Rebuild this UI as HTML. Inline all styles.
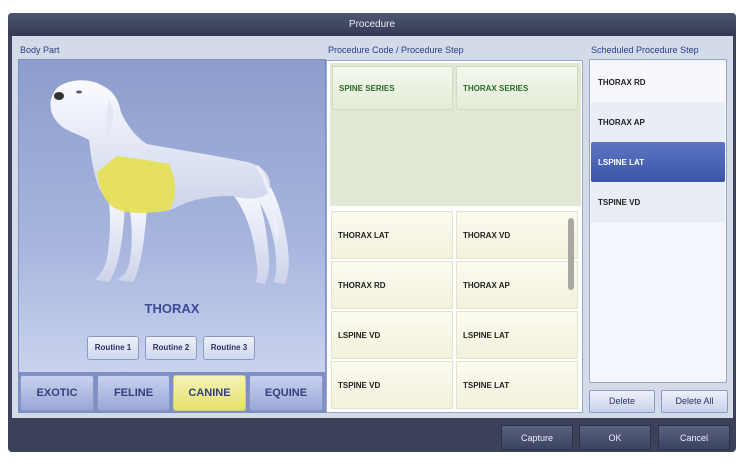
<!DOCTYPE html>
<html><head><style>
*{margin:0;padding:0;box-sizing:border-box}
body{width:744px;height:470px;background:#fff;font-family:"Liberation Sans",sans-serif;position:relative;overflow:hidden}
.a{position:absolute}
.frame{left:8px;top:13px;width:728px;height:439px;background:#3b4159;border-radius:4px}
.title{left:8px;top:13px;width:728px;height:23px;background:linear-gradient(#4e5670,#343a52);border-radius:4px 4px 0 0;color:#e8ecf5;font-size:10px;text-align:center;line-height:23px}
.content{left:12px;top:36px;width:721px;height:382px;background:#d4dbe8}
.lbl{font-size:9px;color:#2a3a8c}
.tile{font-size:8px;font-weight:bold;color:#222;padding-left:6px;display:flex;align-items:center;background:linear-gradient(#fbfbf0,#f2f1dc);border:1px solid #e4e3cf}
.g{color:#2a6a2a;background:linear-gradient(#f4f8ee,#e3ecd6);border:1px solid #cfdcc2}
.sp{font-size:8px;font-weight:bold;color:#222;padding-left:7px;display:flex;align-items:center}
.rb{font-size:8px;font-weight:bold;color:#2b3560;background:linear-gradient(#eef1fa,#cfd7ee);border:1px solid #8c9acb;border-radius:3px;text-align:center;line-height:22px}
.sb{font-size:11px;font-weight:bold;color:#34407a;background:linear-gradient(#c9d1ee,#9aa8d6);border:1px solid #8795c8;border-radius:3px;text-align:center;line-height:34px}
.bb{font-size:9px;color:#eef;background:linear-gradient(#5a6280,#3c4360);border:1px solid #2c3148;text-align:center;line-height:24px}
.db{font-size:9px;color:#2b3560;background:linear-gradient(#eef1fa,#c8d1ea);border:1px solid #8c9acb;border-radius:2px;text-align:center;line-height:21px}
</style></head><body>
<div class="a frame"></div>
<div class="a title">Procedure</div>
<div class="a content"></div>
<div class="a lbl" style="left:20px;top:45px">Body Part</div>
<div class="a lbl" style="left:328px;top:45px">Procedure Code / Procedure Step</div>
<div class="a lbl" style="left:591px;top:45px">Scheduled Procedure Step</div>

<div class="a" style="left:18px;top:59px;width:308px;height:354px;background:#7d8fc4"></div>
<div class="a" style="left:19px;top:60px;width:306px;height:312px;background:linear-gradient(#8d9dcc,#a8b6de 60%,#c9d3ee)">
<svg width="306" height="312" viewBox="0 0 306 312">
<defs><linearGradient id="w" x1="0" y1="0" x2="0" y2="1"><stop offset="0" stop-color="#fafbff"/><stop offset="1" stop-color="#cdd4ea"/></linearGradient></defs>
<g fill="url(#w)">
<!-- rear legs -->
<path d="M205,125 C222,140 232,165 236,190 C238,205 240,215 236,222 L246,224 C252,212 250,196 248,178 C246,158 240,140 236,125Z"/>
<path d="M222,120 C240,135 252,160 256,188 C258,204 258,214 254,222 L266,224 C272,210 270,190 266,170 C262,150 256,132 246,118Z"/>
<!-- front legs -->
<path d="M88,128 C92,150 92,175 88,198 C86,208 82,214 76,220 L90,222 C98,210 102,190 104,170 C106,152 106,140 104,130Z"/>
<path d="M108,138 C114,160 114,185 110,205 C108,212 104,216 98,220 L114,222 C120,212 124,190 126,170 C128,155 128,145 126,138Z"/>
<!-- body -->
<path d="M38,28 C50,18 72,18 84,26 C96,32 100,42 102,52 C108,66 118,78 128,84 C160,90 200,96 228,102 C246,106 254,118 250,132 C244,140 226,140 214,136 C196,136 176,138 160,146 C146,154 128,154 112,148 C98,144 86,140 80,128 C74,112 72,96 70,80 C60,74 48,72 40,64 C30,54 28,40 38,28Z"/>
</g>
<path d="M78,112 C80,130 86,145 100,150 C112,154 128,154 150,150 C158,140 158,120 150,104 C130,100 112,98 98,96 C90,102 84,108 78,112Z" fill="#e6e054" opacity="0.92"/>
<path d="M90,40 C96,50 96,64 88,74 C86,70 86,56 90,40Z" fill="#e4e8f4"/>
<path d="M238,106 C250,120 254,150 258,176" stroke="#eef" stroke-width="3" fill="none"/>
<ellipse cx="40" cy="36" rx="5" ry="4" fill="#333"/>
<ellipse cx="60" cy="32" rx="3" ry="1.5" fill="#556"/>
</svg></div>
<div class="a" style="left:19px;top:301px;width:306px;text-align:center;font-size:13px;font-weight:bold;color:#3a4a9c">THORAX</div>
<div class="a rb" style="left:87px;top:336px;width:52px;height:24px">Routine 1</div>
<div class="a rb" style="left:145px;top:336px;width:52px;height:24px">Routine 2</div>
<div class="a rb" style="left:203px;top:336px;width:52px;height:24px">Routine 3</div>
<div class="a sb" style="left:20px;top:375px;width:74px;height:36px">EXOTIC</div>
<div class="a sb" style="left:97px;top:375px;width:73px;height:36px">FELINE</div>
<div class="a sb" style="left:173px;top:375px;width:73px;height:36px;background:linear-gradient(#f4f2b8,#e6e16a);border-color:#d4cf70">CANINE</div>
<div class="a sb" style="left:249px;top:375px;width:74px;height:36px">EQUINE</div>

<div class="a" style="left:326px;top:60px;width:257px;height:353px;background:#fff;border:1px solid #9aa6cc"></div>
<div class="a" style="left:330px;top:63px;width:251px;height:143px;background:#e1e9d6"></div>
<div class="a tile g" style="left:332px;top:66px;width:121px;height:44px">SPINE SERIES</div>
<div class="a tile g" style="left:456px;top:66px;width:122px;height:44px">THORAX SERIES</div>
<div class="a tile" style="left:331px;top:211px;width:122px;height:48px">THORAX LAT</div>
<div class="a tile" style="left:456px;top:211px;width:122px;height:48px">THORAX VD</div>
<div class="a tile" style="left:331px;top:261px;width:122px;height:48px">THORAX RD</div>
<div class="a tile" style="left:456px;top:261px;width:122px;height:48px">THORAX AP</div>
<div class="a tile" style="left:331px;top:311px;width:122px;height:48px">LSPINE VD</div>
<div class="a tile" style="left:456px;top:311px;width:122px;height:48px">LSPINE LAT</div>
<div class="a tile" style="left:331px;top:361px;width:122px;height:48px">TSPINE VD</div>
<div class="a tile" style="left:456px;top:361px;width:122px;height:48px">TSPINE LAT</div>
<div class="a" style="left:568px;top:218px;width:6px;height:72px;background:#a8a8a0;border-radius:3px"></div>

<div class="a" style="left:589px;top:59px;width:138px;height:324px;background:#f3f6fc;border:1px solid #9aa6cc;border-radius:2px"></div>
<div class="a sp" style="left:591px;top:62px;width:134px;height:40px;background:#f6f8fc">THORAX RD</div>
<div class="a sp" style="left:591px;top:102px;width:134px;height:40px;background:#e9edf6">THORAX AP</div>
<div class="a sp" style="left:591px;top:142px;width:134px;height:40px;background:linear-gradient(#5c76c4,#3c55a8);color:#fff;border-radius:2px">LSPINE LAT</div>
<div class="a sp" style="left:591px;top:182px;width:134px;height:40px;background:#e9edf6">TSPINE VD</div>
<div class="a db" style="left:589px;top:390px;width:66px;height:23px">Delete</div>
<div class="a db" style="left:661px;top:390px;width:67px;height:23px">Delete All</div>

<div class="a bb" style="left:501px;top:425px;width:72px;height:25px">Capture</div>
<div class="a bb" style="left:579px;top:425px;width:72px;height:25px">OK</div>
<div class="a bb" style="left:658px;top:425px;width:72px;height:25px">Cancel</div>
</body></html>
